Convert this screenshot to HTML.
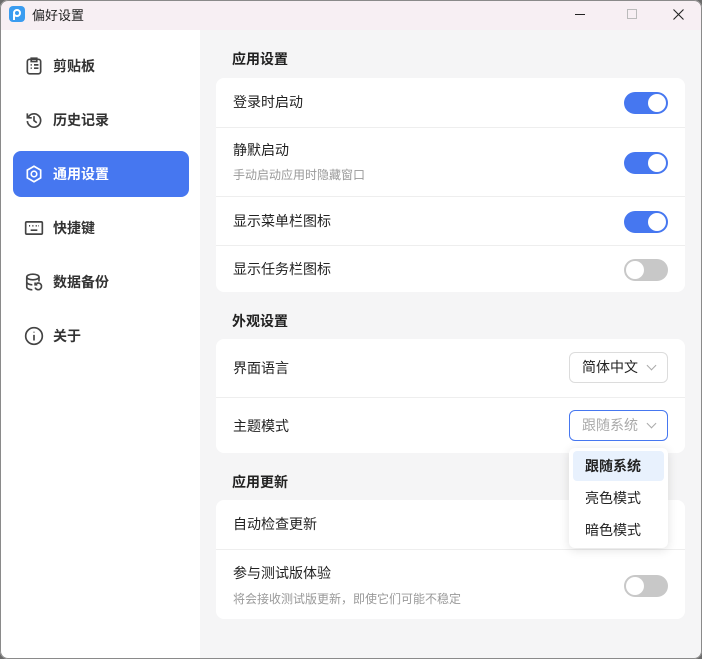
<!DOCTYPE html>
<html><head><meta charset="utf-8"><style>
*{margin:0;padding:0;box-sizing:border-box}
body{width:702px;height:659px;overflow:hidden;background:#6b6b6b;font-family:"Liberation Sans","Noto Sans CJK SC",sans-serif;color:#222}
.win{position:absolute;left:0;top:0;width:702px;height:659px;border-radius:8px;overflow:hidden;background:#f5f5f6}
.bd{position:absolute;left:0;top:0;width:702px;height:659px;border:1px solid #8a8a8a;border-radius:8px;z-index:9}
.title{position:absolute;left:0;top:0;width:702px;height:30px;background:#f7eff3}
.side{position:absolute;left:0;top:30px;width:200px;height:629px;background:#fff}
.ni{position:absolute;left:13px;width:176px;height:46px;border-radius:8px;font-size:14px;font-weight:bold;color:#333;display:flex;align-items:center;padding-left:11px}
.ni svg{width:20px;height:20px;margin-right:9px;flex:none}
.ni.act{background:#4677f0;color:#fff}
.h{position:absolute;left:232px;font-size:14px;font-weight:bold;color:#222}
.card{position:absolute;left:216px;width:469px;background:#fff;border-radius:8px}
.row{position:absolute;left:0;width:469px;border-top:1px solid #eeeeee}
.row:first-child{border-top:none}
.lb{position:absolute;left:17px;font-size:14px;color:#222}
.sub{position:absolute;left:17px;font-size:12px;color:#999}
.tg{position:absolute;left:408px;width:44px;height:22px;border-radius:11px;background:#4677f0}
.tg::after{content:"";position:absolute;right:2px;top:2px;width:18px;height:18px;border-radius:50%;background:#fff}
.tg.off{background:#c8c8c8}
.tg.off::after{left:2px;right:auto}
.sel{position:absolute;left:353px;width:99px;height:31px;border:1px solid #dcdcdc;border-radius:6px;font-size:14px;padding-left:12px;line-height:29px;color:#222}
.sel::after{content:"";position:absolute;right:12px;top:9px;width:6px;height:6px;border-right:1px solid #aaa;border-bottom:1px solid #aaa;transform:rotate(45deg)}
</style></head><body><div class="win">
<div class="title">
 <div style="position:absolute;left:9px;top:6px;width:16px;height:16px;background:#3a9cf0;border-radius:4px"><div style="position:absolute;left:4px;top:3px;width:8px;height:8px;border:2px solid #fff;border-radius:50%"></div><div style="position:absolute;left:4px;top:8px;width:2px;height:6px;background:#fff"></div></div>
 <div style="position:absolute;left:32px;top:5px;font-size:13px;color:#222">偏好设置</div>
 <div style="position:absolute;left:22px"></div>
 <div style="position:absolute;left:575px;top:14px;width:10px;height:1px;background:#222"></div>
 <div style="position:absolute;left:627px;top:9px;width:10px;height:10px;border:1px solid #bbb"></div>
 <svg style="position:absolute;left:673px;top:9px" width="11" height="11" viewBox="0 0 11 11" stroke="#222" stroke-width="1.1"><path d="M0.5 0.5L10.5 10.5M10.5 0.5L0.5 10.5"/></svg>
</div>
<div class="side">
 <div class="ni" style="top:13px"><svg viewBox="0 0 18 18" fill="none" stroke="#444" stroke-width="1.5"><rect x="3" y="3" width="12" height="13" rx="2"/><path d="M6.5 2h5v3h-5z M6 8h1 M9 8h4 M6 11h1 M9 11h4"/></svg>剪贴板</div>
 <div class="ni" style="top:67px"><svg viewBox="0 0 18 18" fill="none" stroke="#444" stroke-width="1.5"><path d="M3.5 7A6 6 0 1 1 3 10 M3 3v4h4 M9 5.5v4l2.5 2"/></svg>历史记录</div>
 <div class="ni act" style="top:121px"><svg viewBox="0 0 18 18" fill="none" stroke="#fff" stroke-width="1.5"><path d="M9 2l6 3.5v7L9 16l-6-3.5v-7z"/><circle cx="9" cy="9" r="2.5"/></svg>通用设置</div>
 <div class="ni" style="top:175px"><svg viewBox="0 0 18 18" fill="none" stroke="#444" stroke-width="1.5"><rect x="1.5" y="3.5" width="15" height="11" rx="1"/><path d="M4.5 7h1M7.5 7h1M10.5 7h1M13 7h.5M6 11h6" /></svg>快捷键</div>
 <div class="ni" style="top:229px"><svg viewBox="0 0 18 18" fill="none" stroke="#444" stroke-width="1.5"><ellipse cx="8" cy="4.5" rx="5.5" ry="2.5"/><path d="M2.5 4.5v9c0 1.4 2.5 2.5 5 2.5M13.5 4.5v4M2.5 9c0 1.4 2.5 2.5 5 2.5M10 14a3 3 0 1 0 1-3.5M10 9.5v2h2"/></svg>数据备份</div>
 <div class="ni" style="top:283px"><svg viewBox="0 0 18 18" fill="none" stroke="#444" stroke-width="1.5"><circle cx="9" cy="9" r="7.5"/><path d="M9 8v5M9 5.2v.6"/></svg>关于</div>
</div>
<div class="h" style="top:49px">应用设置</div>
<div class="card" style="top:78px;height:214px">
 <div class="row" style="top:0;height:49px"><div class="lb" style="top:14px">登录时启动</div><div class="tg" style="top:14px"></div></div>
 <div class="row" style="top:49px;height:69px"><div class="lb" style="top:12px">静默启动</div><div class="sub" style="top:38px">手动启动应用时隐藏窗口</div><div class="tg" style="top:24px"></div></div>
 <div class="row" style="top:118px;height:49px"><div class="lb" style="top:14px">显示菜单栏图标</div><div class="tg" style="top:14px"></div></div>
 <div class="row" style="top:167px;height:47px"><div class="lb" style="top:13px">显示任务栏图标</div><div class="tg off" style="top:13px"></div></div>
</div>
<div class="h" style="top:311px">外观设置</div>
<div class="card" style="top:339px;height:114px">
 <div class="row" style="top:0;height:58px"><div class="lb" style="top:19px">界面语言</div><div class="sel" style="top:13px">简体中文</div></div>
 <div class="row" style="top:58px;height:56px"><div class="lb" style="top:18px">主题模式</div><div class="sel" style="top:12px;border-color:#4677f0;color:#aaa">跟随系统</div></div>
</div>
<div class="h" style="top:472px">应用更新</div>
<div class="card" style="top:500px;height:119px">
 <div class="row" style="top:0;height:49px"><div class="lb" style="top:14px">自动检查更新</div></div>
 <div class="row" style="top:49px;height:70px"><div class="lb" style="top:13px">参与测试版体验</div><div class="sub" style="top:40px">将会接收测试版更新，即使它们可能不稳定</div><div class="tg off" style="top:25px"></div></div>
</div>
<div style="position:absolute;left:569px;top:448px;width:99px;height:100px;background:#fff;border-radius:6px;box-shadow:0 2px 10px rgba(0,0,0,.12)">
 <div style="position:absolute;left:4px;top:3px;width:91px;height:30px;background:#e8f1fd;border-radius:4px"></div>
 <div style="position:absolute;left:16px;top:8px;font-size:14px;font-weight:bold">跟随系统</div>
 <div style="position:absolute;left:16px;top:40px;font-size:14px">亮色模式</div>
 <div style="position:absolute;left:16px;top:72px;font-size:14px">暗色模式</div>
</div>
</div><div class="bd"></div></body></html>
